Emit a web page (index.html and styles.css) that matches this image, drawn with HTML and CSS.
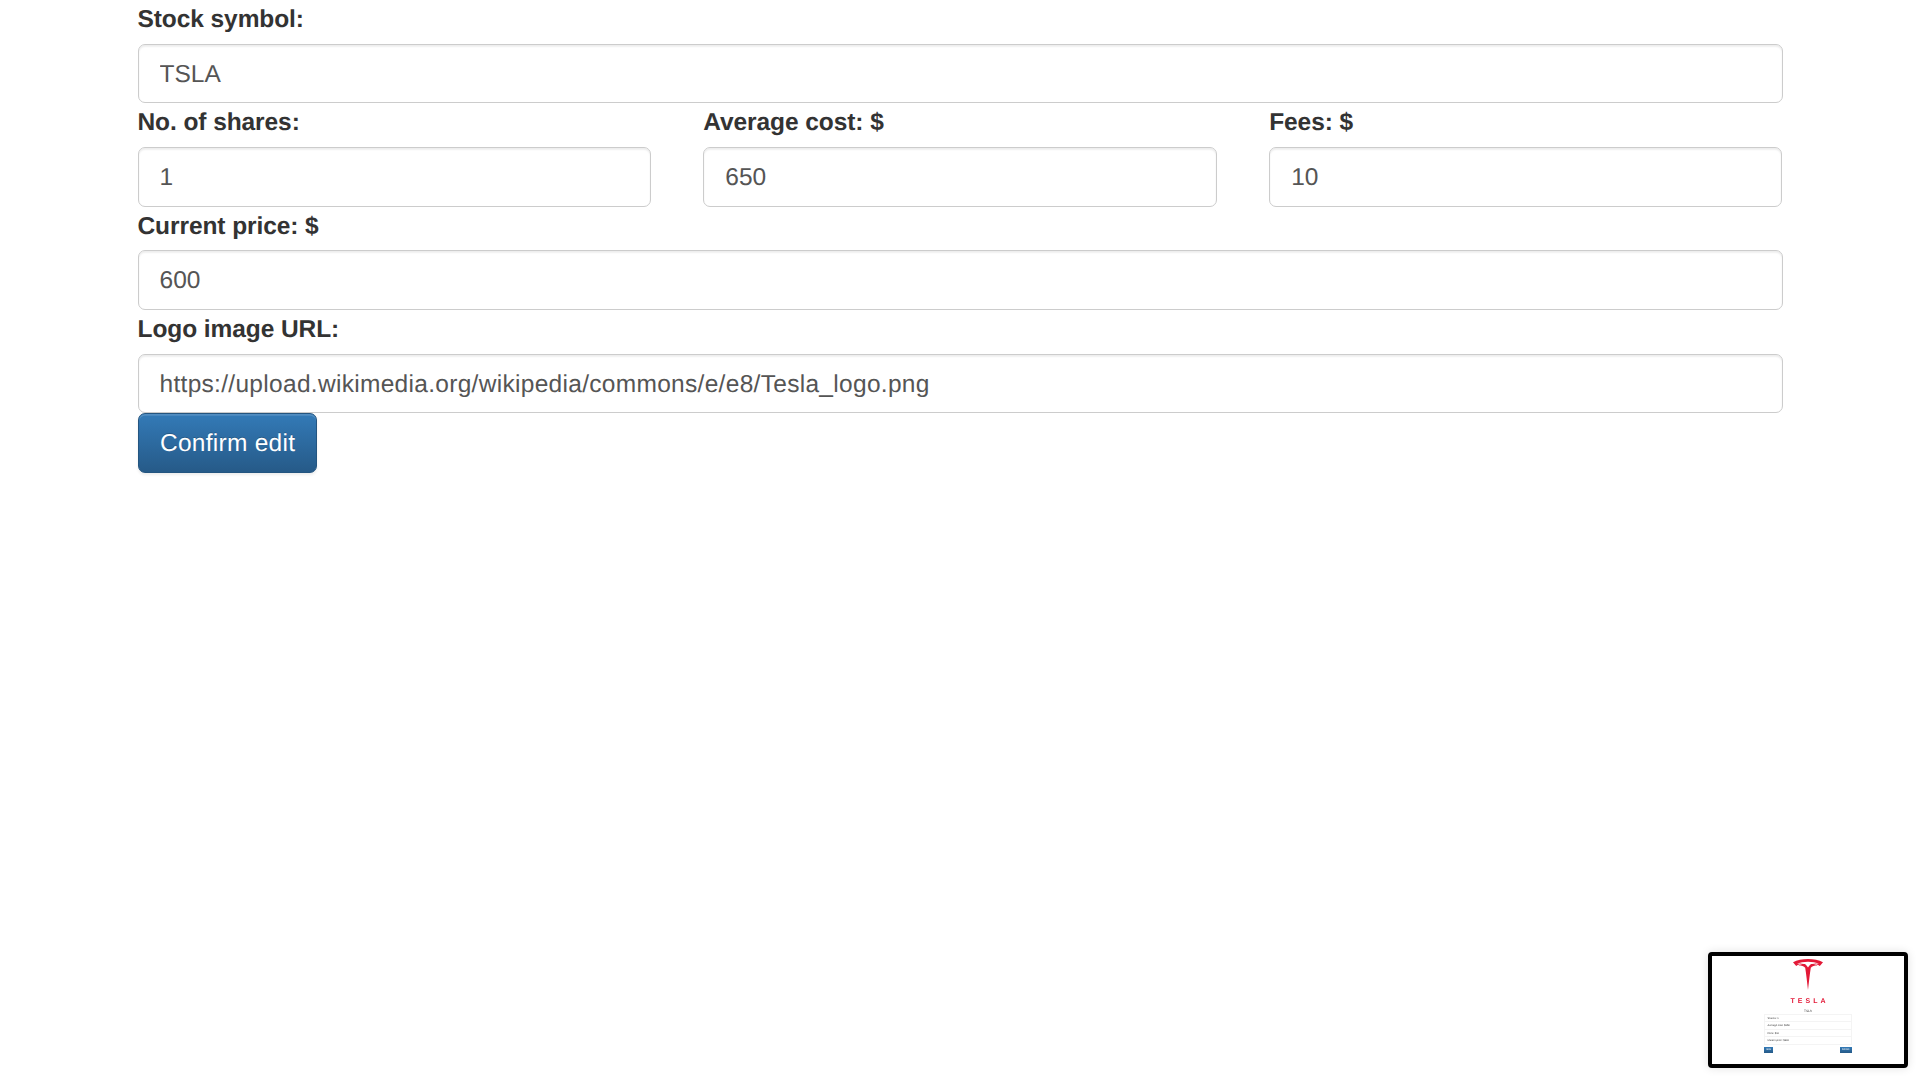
FILE: index.html
```html
<!DOCTYPE html>
<html lang="en">
<head>
<meta charset="utf-8">
<title>Edit stock</title>
<link rel="stylesheet" href="styles.css">
</head>
<body>
<main class="container">
  <form class="stock-form">
    <div class="field">
      <label class="field-label" for="symbol">Stock symbol:</label>
      <input class="field-input" id="symbol" type="text" value="TSLA">
    </div>
    <div class="field-row">
      <div class="field field-col">
        <label class="field-label" for="shares">No. of shares:</label>
        <input class="field-input" id="shares" type="text" value="1">
      </div>
      <div class="field field-col">
        <label class="field-label" for="cost">Average cost: $</label>
        <input class="field-input" id="cost" type="text" value="650">
      </div>
      <div class="field field-col">
        <label class="field-label" for="fees">Fees: $</label>
        <input class="field-input" id="fees" type="text" value="10">
      </div>
    </div>
    <div class="field">
      <label class="field-label" for="price">Current price: $</label>
      <input class="field-input" id="price" type="text" value="600">
    </div>
    <div class="field">
      <label class="field-label" for="logo">Logo image URL:</label>
      <input class="field-input field-input-url" id="logo" type="text" value="https://upload.wikimedia.org/wikipedia/commons/e/e8/Tesla_logo.png">
    </div>
    <button class="confirm-btn" type="button">Confirm edit</button>
  </form>
</main>

<aside class="preview">
  <div class="mini-page">
    <svg class="mini-logo" viewBox="0 0 30 31" aria-hidden="true">
      <path class="mini-logo-fill" d="M0 3.200C4 1.200 9.500 0 15 0s11 1.200 15 3.200C28.800 4.800 27.800 6 26.800 7 25 5.700 22 4.800 19 4.600 22 4.300 25 4.800 26.800 5.400 23 3.400 19 2.800 15 2.800S7 3.400 3.200 5.400C5 4.800 8 4.300 11 4.600 8 4.800 5 5.700 3.200 7 2.200 6 1.200 4.800 0 3.200Z"/>
      <path class="mini-logo-fill" d="M5.500 6.400C8 5.200 10.500 4.900 12.300 5.200 13.300 6 14.200 7 15 8.500 15.800 7 16.700 6 17.700 5.200 19.500 4.900 22 5.200 24.500 6.400 21.500 6.400 19 7 17.800 8.800 16.800 15 15.800 24 15 31 14.200 24 13.200 15 12.200 8.800 11 7 8.500 6.400 5.500 6.400Z"/>
    </svg>
    <div class="mini-word">TESLA</div>
    <div class="mini-symbol">TSLA</div>
    <ul class="mini-list">
      <li class="mini-item">Shares: 1</li>
      <li class="mini-item">Average cost: $650</li>
      <li class="mini-item">Fees: $10</li>
      <li class="mini-item">Market price: $600</li>
    </ul>
    <div class="mini-actions">
      <span class="mini-btn">Edit</span>
      <span class="mini-btn">Delete</span>
    </div>
  </div>
</aside>
</body>
</html>
```

FILE: styles.css
```css
* {
  box-sizing: border-box;
}

html,
body {
  height: 100%;
}

body {
  margin: 0;
  background: #fff;
  color: #333;
  font-family: "Liberation Sans", Arial, sans-serif;
  font-size: 24.5px;
  line-height: 35px;
  text-rendering: geometricPrecision;
  overflow: hidden;
}

.container {
  width: 1645px;
  margin: 0 auto;
}

.stock-form {
  display: flex;
  flex-direction: column;
  align-items: stretch;
}

.field-row {
  display: flex;
  gap: 52.5px;
}

.field-col {
  flex: 1 1 0;
  min-width: 0;
}

.field-label {
  display: block;
  height: 35px;
  margin-bottom: 8.75px;
  padding-top: 2px;
  font-weight: 700;
  letter-spacing: -0.08px;
}

.field-input {
  display: block;
  width: 100%;
  height: 59.5px;
  padding: 13px 21px 10.5px;
  border: 1.75px solid #ccc;
  border-radius: 7px;
  background: #fff;
  box-shadow: inset 0 1.75px 1.75px rgba(0, 0, 0, 0.075);
  color: #555;
  font: inherit;
  line-height: 35px;
  text-rendering: geometricPrecision;
  outline: none;
}

.field-input-url {
  letter-spacing: 0.3px;
}

.confirm-btn {
  align-self: flex-start;
  height: 60px;
  padding: 10.5px 21px 10.5px 21.5px;
  border: 1.75px solid #245580;
  border-radius: 7px;
  background: linear-gradient(to bottom, #337ab7 0%, #265a88 100%);
  box-shadow: inset 0 1.75px 0 rgba(255, 255, 255, 0.15), 0 1.75px 3px rgba(0, 0, 0, 0.075);
  color: #fff;
  font: inherit;
  letter-spacing: 0.27px;
  text-rendering: geometricPrecision;
  text-shadow: 0 -1px 0 rgba(0, 0, 0, 0.2);
}

/* Thumbnail floating over the page, bottom right */
.preview {
  position: fixed;
  right: 12px;
  bottom: 12px;
  width: 200px;
  height: 116px;
  border: 4px solid #000;
  border-radius: 4px;
  background: #fff;
  box-shadow: 0 0 10px rgba(0, 0, 0, 0.12);
  overflow: hidden;
}

.mini-page {
  display: flex;
  flex-direction: column;
  align-items: center;
  height: 100%;
  padding-top: 3px;
  filter: blur(0.3px);
  color: #333;
}

.mini-logo {
  display: block;
  width: 30px;
  height: 31px;
  flex: none;
}

.mini-logo-fill {
  fill: #e31937;
}

.mini-word {
  margin-top: 8px;
  padding-left: 3px;
  color: #e31937;
  font-size: 7px;
  font-weight: 700;
  line-height: 7px;
  letter-spacing: 3px;
}

.mini-symbol {
  margin-top: 3px;
  font-size: 3.2px;
  line-height: 6px;
}

.mini-list {
  width: 88px;
  margin: 0;
  padding: 0;
  border: 0.5px solid #f4f4f4;
  list-style: none;
}

.mini-item {
  height: 7.25px;
  padding-left: 2.5px;
  border-bottom: 0.5px solid #f4f4f4;
  font-size: 2.6px;
  line-height: 7px;
}

.mini-item:last-child {
  border-bottom: 0;
}

.mini-actions {
  display: flex;
  justify-content: space-between;
  width: 88px;
  margin-top: 1.5px;
}

.mini-btn {
  padding: 0 2.500px;
  background: linear-gradient(to bottom, #337ab7, #265a88);
  color: #fff;
  font-size: 2.6px;
  line-height: 6px;
}
```
